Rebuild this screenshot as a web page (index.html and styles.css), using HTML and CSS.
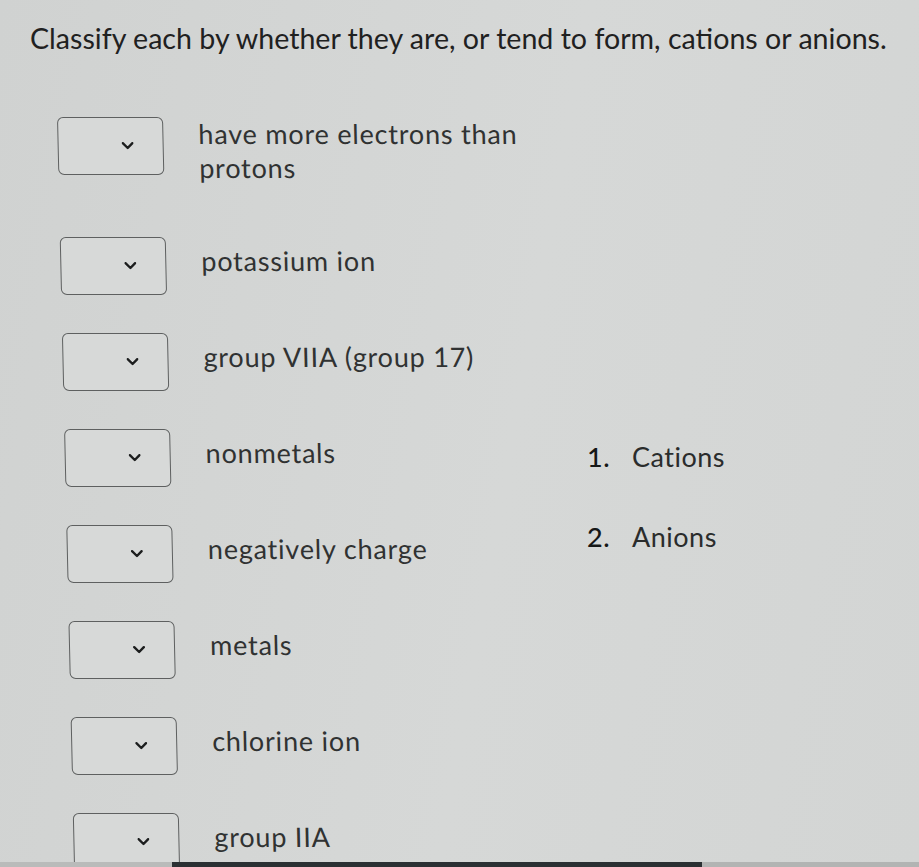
FILE: index.html
```html
<!DOCTYPE html>
<html lang="en">
<head>
<meta charset="utf-8">
<title>Classify ions</title>
<link rel="stylesheet" href="styles.css">
</head>
<body>
<div class="screen">
  <main class="main">
    <h1 class="title">Classify each by whether they are, or tend to form, cations or anions.</h1>
    <div class="content">
      <div class="rows">
        <div class="row two">
          <div class="select"><svg class="chev" viewBox="0 0 12 8" width="12" height="8"><path d="M1.2 1.2 L6 6 L10.8 1.2"/></svg></div>
          <div class="label">have more electrons than<br>protons</div>
        </div>
        <div class="row">
          <div class="select"><svg class="chev" viewBox="0 0 12 8" width="12" height="8"><path d="M1.2 1.2 L6 6 L10.8 1.2"/></svg></div>
          <div class="label">potassium ion</div>
        </div>
        <div class="row">
          <div class="select"><svg class="chev" viewBox="0 0 12 8" width="12" height="8"><path d="M1.2 1.2 L6 6 L10.8 1.2"/></svg></div>
          <div class="label">group VIIA (group 17)</div>
        </div>
        <div class="row">
          <div class="select"><svg class="chev" viewBox="0 0 12 8" width="12" height="8"><path d="M1.2 1.2 L6 6 L10.8 1.2"/></svg></div>
          <div class="label">nonmetals</div>
        </div>
        <div class="row">
          <div class="select"><svg class="chev" viewBox="0 0 12 8" width="12" height="8"><path d="M1.2 1.2 L6 6 L10.8 1.2"/></svg></div>
          <div class="label">negatively charge</div>
        </div>
        <div class="row">
          <div class="select"><svg class="chev" viewBox="0 0 12 8" width="12" height="8"><path d="M1.2 1.2 L6 6 L10.8 1.2"/></svg></div>
          <div class="label">metals</div>
        </div>
        <div class="row">
          <div class="select"><svg class="chev" viewBox="0 0 12 8" width="12" height="8"><path d="M1.2 1.2 L6 6 L10.8 1.2"/></svg></div>
          <div class="label">chlorine ion</div>
        </div>
        <div class="row">
          <div class="select"><svg class="chev" viewBox="0 0 12 8" width="12" height="8"><path d="M1.2 1.2 L6 6 L10.8 1.2"/></svg></div>
          <div class="label">group IIA</div>
        </div>
      </div>
      <ol class="legend">
        <li class="item"><span class="num">1.</span><span class="name">Cations</span></li>
        <li class="item"><span class="num">2.</span><span class="name">Anions</span></li>
      </ol>
    </div>
  </main>
  <footer class="strip">
    <div class="seg light"></div>
    <div class="seg dark"></div>
    <div class="seg grey"></div>
  </footer>
</div>
</body>
</html>
```

FILE: styles.css
```css
html, body {
  margin: 0;
  padding: 0;
}
body {
  background: #d4d6d5;
  font-family: Lato, "Open Sans", sans-serif;
  color: #2e3030;
}
.screen {
  width: 919px;
  height: 867px;
  display: flex;
  flex-direction: column;
  overflow: hidden;
  background: linear-gradient(100deg, #d0d2d1 0%, #d6d8d7 55%, #d3d5d4 100%);
}
.main {
  flex: 1;
  min-height: 0;
  overflow: hidden;
  padding: 20px 0 0 30px;
}
.title {
  margin: 0;
  font-size: 28.6px;
  font-weight: 400;
  line-height: 36px;
  letter-spacing: 0;
  color: #1f2121;
  white-space: nowrap;
}
.content {
  display: flex;
  margin-top: 61px;
}
.rows {
  display: flex;
  flex-direction: column;
  gap: 38px;
  width: 530px;
  padding-left: 27px;
  transform: skewX(1.3deg);
  transform-origin: top left;
}
.row {
  display: flex;
  align-items: flex-start;
  gap: 35px;
}
.row.two {
  margin-bottom: 14px;
}
.select {
  flex: none;
  width: 106px;
  height: 58px;
  box-sizing: border-box;
  border: 1.5px solid #5e6060;
  border-radius: 6px;
  background: #d7d9d8;
  display: flex;
  align-items: center;
  justify-content: flex-end;
  padding-right: 29px;
}
.chev {
  display: block;
}
.chev path {
  fill: none;
  stroke: #1c1e1e;
  stroke-width: 2.4;
  stroke-linecap: round;
  stroke-linejoin: round;
}
.label {
  font-size: 27px;
  line-height: 34px;
  letter-spacing: 0.8px;
  padding-top: 7px;
  color: #303232;
}
.row.two .label {
  padding-top: 0;
}
.legend {
  list-style: none;
  margin: 0;
  padding: 323px 0 0 0;
  display: flex;
  flex-direction: column;
  gap: 46px;
}
.item {
  display: flex;
  align-items: baseline;
  font-size: 27px;
  line-height: 34px;
  letter-spacing: 0.5px;
}
.num {
  width: 45px;
  color: #151717;
  font-weight: 500;
}
.name {
  color: #2a2c2c;
}
.strip {
  flex: none;
  height: 5px;
  display: flex;
}
.seg.light {
  width: 172px;
  background: #b9bbba;
}
.seg.dark {
  width: 530px;
  background: #2b3033;
}
.seg.grey {
  flex: 1;
  background: #b2b4b3;
}
```
